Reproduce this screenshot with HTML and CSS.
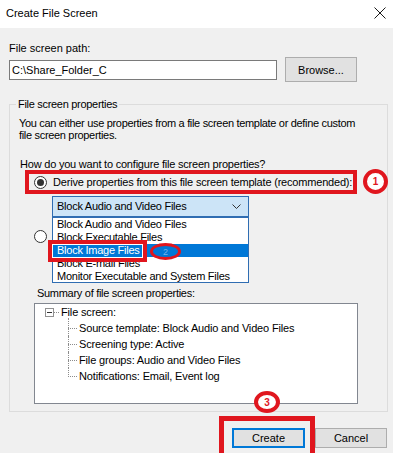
FILE: index.html
```html
<!DOCTYPE html>
<html lang="en">
<head>
<meta charset="utf-8">
<title>Create File Screen</title>
<link rel="stylesheet" href="styles.css">
</head>
<body>
<div class="dialog">
  <div class="titlebar">
    <span class="title">Create File Screen</span>
    <svg class="close" viewBox="0 0 12 12" width="12" height="12" aria-hidden="true"><path d="M0.5 0.5 L11.5 11.5 M11.5 0.5 L0.5 11.5" stroke="#1a1a1a" stroke-width="1" fill="none"/></svg>
  </div>
  <div class="content">
    <div class="field-label">File screen path:</div>
    <div class="path-row">
      <div class="path-input">C:\Share_Folder_C</div>
      <button class="btn browse">Browse...</button>
    </div>
    <fieldset class="group">
      <legend>File screen properties</legend>
      <div class="group-body">
        <p class="desc">You can either use properties from a file screen template or define custom<br>file screen properties.</p>
        <p class="question">How do you want to configure file screen properties?</p>
        <div class="radio-row first"><span class="radio checked"></span><span>Derive properties from this file screen template (recommended):</span></div>
        <div class="combo-wrap">
          <div class="combo"><span>Block Audio and Video Files</span>
            <svg class="chev" viewBox="0 0 9 5" width="9" height="5" aria-hidden="true"><path d="M0.5 0.5 L4.5 4.5 L8.5 0.5" stroke="#333" stroke-width="1" fill="none"/></svg>
          </div>
          <ul class="listbox">
            <li>Block Audio and Video Files</li>
            <li>Block Executable Files</li>
            <li class="selected">Block Image Files</li>
            <li>Block E-mail Files</li>
            <li>Monitor Executable and System Files</li>
          </ul>
        </div>
        <div class="radio-row second"><span class="radio"></span></div>
        <div class="summary-label">Summary of file screen properties:</div>
        <div class="tree">
          <div class="tree-root">
            <span class="expander"></span><span class="root-dots"></span><span>File screen:</span>
          </div>
          <ul class="tree-children">
            <li>Source template: Block Audio and Video Files</li>
            <li>Screening type: Active</li>
            <li>File groups: Audio and Video Files</li>
            <li>Notifications: Email, Event log</li>
          </ul>
        </div>
      </div>
    </fieldset>
    <div class="buttons">
      <button class="btn default">Create</button>
      <button class="btn">Cancel</button>
    </div>
  </div>

  <div class="mark box1"></div>
  <div class="mark circle c1">1</div>
  <div class="mark box2"></div>
  <div class="mark ellipse2">2</div>
  <div class="mark circle c3">3</div>
  <div class="mark box3"></div>
</div>
</body>
</html>
```

FILE: styles.css
```css
* { box-sizing: border-box; }
html, body { margin: 0; padding: 0; }
body {
  font-family: "Liberation Sans", Arial, sans-serif;
  font-size: 11px;
  color: #000;
  background: #f0f0f0;
  width: 393px;
  height: 453px;
  overflow: hidden;
}
.dialog { position: relative; width: 393px; height: 453px; }

.titlebar {
  height: 28px;
  background: #fff;
  display: flex;
  align-items: center;
  justify-content: space-between;
  padding: 0 7px 2px 6px;
}
.title { line-height: 13px; }
.close { display: block; width: 12px; height: 12px; }

.content { padding: 14px 5px 0 9px; }
.field-label { line-height: 13px; }
.path-row {
  display: flex;
  align-items: center;
  gap: 8px;
  margin-top: 2px;
  height: 25px;
}
.path-input {
  width: 268px;
  height: 20px;
  background: #fff;
  border: 1px solid #7a7a7a;
  padding: 0 2px;
  line-height: 18px;
}
.btn {
  font: inherit;
  color: #000;
  background: #e1e1e1;
  border: 1px solid #adadad;
  padding: 0;
  margin: 0;
}
.browse { width: 72px; height: 25px; }

.group {
  margin: 16px 0 0 0;
  padding: 0;
  border: 1px solid #dcdcdc;
  width: 379px;
  min-width: 0;
}
.group legend {
  padding: 0 2px;
  margin-left: 6px;
  line-height: 13px;
  letter-spacing: -0.3px;
}
.group-body { padding: 6px 0 7px 9px; }

.desc { margin: 0; line-height: 12px; letter-spacing: -0.32px; }
.question { margin: 17px 0 0 1px; line-height: 12px; letter-spacing: -0.21px; }

.radio-row {
  display: flex;
  align-items: center;
  gap: 6px;
  height: 14px;
  margin: 5px 0 0 15px;
  line-height: 13px;
  letter-spacing: -0.19px;
}
.radio {
  width: 13px;
  height: 13px;
  border: 1px solid #333;
  border-radius: 50%;
  background: #fff;
  display: flex;
  align-items: center;
  justify-content: center;
  flex: none;
}
.radio.checked::after {
  content: "";
  width: 7px;
  height: 7px;
  border-radius: 50%;
  background: #333;
}
.radio-row.second { margin-top: 12px; }

.combo-wrap { position: relative; margin: 7px 0 0 33px; width: 197px; letter-spacing: -0.25px; }
.combo {
  height: 21px;
  background: #cce4f7;
  border: 1px solid #2f6db2;
  display: flex;
  align-items: center;
  justify-content: space-between;
  padding: 0 7px 0 4px;
  line-height: 13px;
}
.chev { display: block; }
.listbox {
  position: absolute;
  top: 21px;
  left: 0;
  width: 197px;
  height: 66px;
  margin: 0;
  padding: 0;
  list-style: none;
  background: #fff;
  border: 1px solid #2f6db2;
  z-index: 2;
}
.listbox li { line-height: 13px; padding-left: 4px; white-space: nowrap; }
.listbox li.selected { background: #0078d7; color: #fff; }

.summary-label { margin: 44px 0 0 18px; line-height: 12px; letter-spacing: -0.29px; }

.tree {
  margin: 4px 0 0 15px;
  width: 324px;
  height: 101px;
  background: #fff;
  border: 1px solid #828790;
  letter-spacing: -0.16px;
}
.tree-root {
  display: flex;
  align-items: center;
  height: 16px;
  padding-left: 10px;
  line-height: 16px;
}
.expander {
  position: relative;
  width: 9px;
  height: 9px;
  border: 1px solid #919191;
  background: #fff;
  flex: none;
}
.expander::after {
  content: "";
  position: absolute;
  left: 1px;
  top: 3px;
  width: 5px;
  height: 1px;
  background: #333;
}
.root-dots {
  width: 5px;
  height: 1px;
  border-top: 1px dotted #8c8c8c;
  margin-right: 2px;
  flex: none;
}
.tree-children {
  list-style: none;
  margin: 0 0 0 33px;
  padding: 0;
}
.tree-children li {
  position: relative;
  padding-left: 11px;
  line-height: 16px;
  white-space: nowrap;
}
.tree-children li::before {
  content: "";
  position: absolute;
  left: 0;
  top: 8px;
  width: 9px;
  border-top: 1px dotted #8c8c8c;
}
.tree-children li::after {
  content: "";
  position: absolute;
  left: 0;
  top: 0;
  bottom: 0;
  border-left: 1px dotted #8c8c8c;
}
.tree-children li:first-child::after { top: -2px; }
.tree-children li:last-child::after { bottom: auto; height: 9px; }

.buttons {
  display: flex;
  justify-content: flex-end;
  gap: 10px;
  margin: 16px 1px 0 0;
}
.buttons .btn { width: 72px; height: 20px; }
.buttons .btn.default { width: 73px; border: 2px solid #0078d7; }

/* red annotation overlays */
.mark { position: absolute; z-index: 5; }
.box1 { left: 25px; top: 170px; width: 332px; height: 24px; border: 4px solid #e0161e; }
.box2 {
  left: 48px; top: 240px; width: 99px; height: 22px;
  border: 4px solid #e0161e;
  box-shadow: inset 0 0 0 1px #fff;
}
.box3 { left: 219px; top: 416px; width: 96px; height: 44px; border: 5px solid #e0161e; }
.circle {
  border: 4px solid #e0161e;
  background: #fff;
  border-radius: 50%;
  color: #e0161e;
  font-weight: bold;
  font-size: 10px;
  display: flex;
  align-items: center;
  justify-content: center;
}
.c1 { left: 363px; top: 169px; width: 25px; height: 25px; }
.c3 { left: 254px; top: 391px; width: 26px; height: 22px; }
.ellipse2 {
  left: 150px; top: 243px; width: 31px; height: 17px;
  border: 3px solid #e0161e;
  border-radius: 50%;
  color: rgba(255,255,255,0.45);
  font-size: 9px;
  display: flex;
  align-items: center;
  justify-content: center;
}
```
